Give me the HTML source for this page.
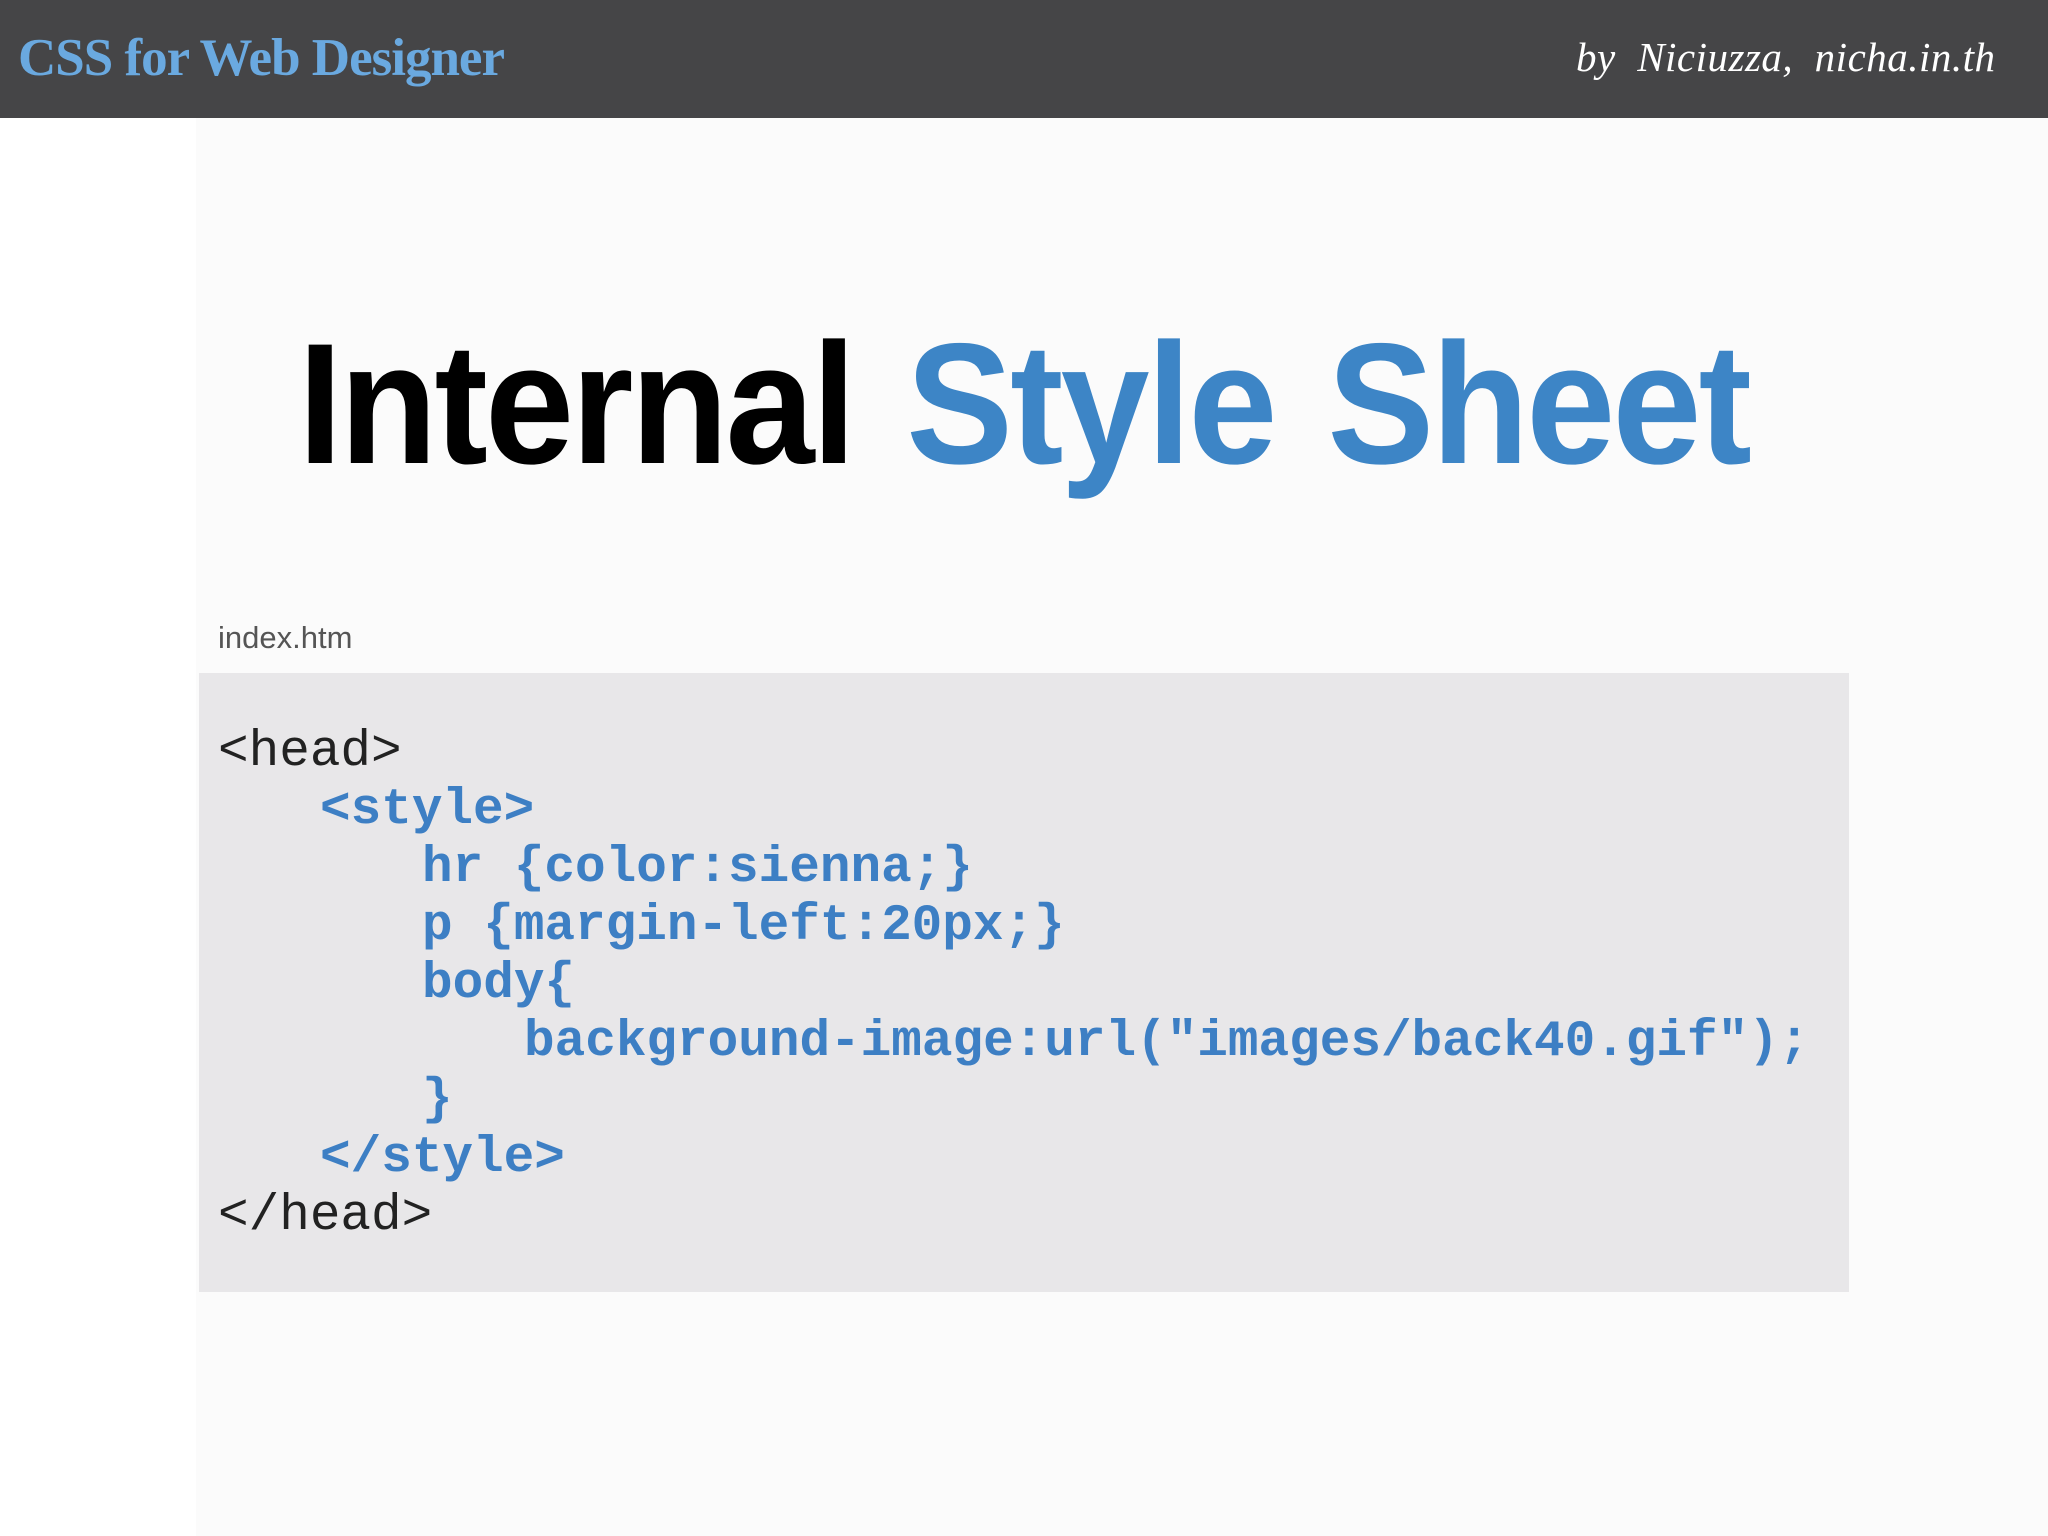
<!DOCTYPE html>
<html><head><meta charset="utf-8"><style>
body{margin:0;width:2048px;height:1536px;background:#fbfbfb;position:relative;overflow:hidden;font-family:"Liberation Sans",sans-serif}
.hdr{position:absolute;left:0;top:0;width:2048px;height:118px;background:#454547}
.ht{position:absolute;left:18px;top:28px;font:bold 53px "Liberation Serif",serif;color:#6aa9e0;letter-spacing:-1px;white-space:nowrap}
.hr{position:absolute;left:1576px;top:33px;font:italic 41px "Liberation Serif",serif;color:#fff;white-space:nowrap;letter-spacing:0.5px}
.lw{position:absolute;left:0;top:118px;width:196px;height:1418px;background:#fff}
.title{position:absolute;left:298px;top:318px;font:bold 172px "Liberation Sans",sans-serif;white-space:nowrap;transform-origin:0 0;transform:scaleX(0.93);letter-spacing:-3px;word-spacing:12px;line-height:1}
.title .b{color:#3d85c6}
.fn{position:absolute;left:218px;top:620px;font-size:31px;color:#555}
.box{position:absolute;left:199px;top:673px;width:1650px;height:619px;background:#e8e7e9}
.c{position:absolute;font:51px "Liberation Mono",monospace;white-space:pre;line-height:58px;color:#222}
.c.bl{color:#3d7fc4;font-weight:bold}
</style></head><body>
<div class="hdr"><div class="ht">CSS for Web Designer</div><div class="hr">by &nbsp;Niciuzza, &nbsp;nicha.in.th</div></div>
<div class="lw"></div>
<div class="title">Internal <span class="b">Style Sheet</span></div>
<div class="fn">index.htm</div>
<div class="box"></div>
<div class="c" style="left:218px;top:724px">&lt;head&gt;</div>
<div class="c bl" style="left:320px;top:782px">&lt;style&gt;</div>
<div class="c bl" style="left:422px;top:840px">hr {color:sienna;}</div>
<div class="c bl" style="left:422px;top:898px">p {margin-left:20px;}</div>
<div class="c bl" style="left:422px;top:956px">body{</div>
<div class="c bl" style="left:524px;top:1014px">background-image:url("images/back40.gif");</div>
<div class="c bl" style="left:422px;top:1072px">}</div>
<div class="c bl" style="left:320px;top:1130px">&lt;/style&gt;</div>
<div class="c" style="left:218px;top:1188px">&lt;/head&gt;</div>
</body></html>
